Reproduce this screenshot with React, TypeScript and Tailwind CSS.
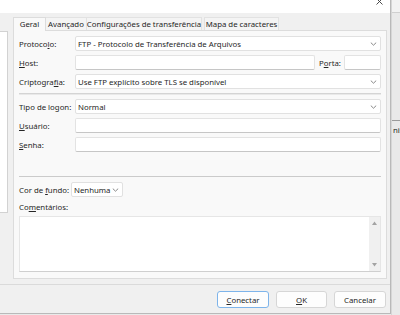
function Chevron() {
  return (
    <svg width="7" height="4" viewBox="0 0 7 4" className="shrink-0">
      <path d="M0.8 0.6 L3.5 3.2 L6.2 0.6" fill="none" stroke="#7a7a7a" strokeWidth="0.9" />
    </svg>
  );
}

function Combo({ value, className = "" }: { value: string; className?: string }) {
  return (
    <div
      className={`flex h-[15px] items-center justify-between rounded-[2px] border border-[#e1e1e1] bg-white pl-[2px] pr-[3px] ${className}`}
    >
      <span className="leading-[12px]">{value}</span>
      <Chevron />
    </div>
  );
}

function Input({ className = "" }: { className?: string }) {
  return (
    <div
      className={`h-[15px] rounded-[2px] border border-[#e3e3e3] border-b-[#c6c6c6] bg-white ${className}`}
    />
  );
}

function Label({ children, className = "w-[56px]" }: { children: React.ReactNode; className?: string }) {
  return <div className={`shrink-0 leading-[12px] ${className}`}>{children}</div>;
}

function Triangle({ up }: { up?: boolean }) {
  return (
    <svg width="5" height="4" viewBox="0 0 5 4">
      <path d={up ? "M0 4 L2.5 0.5 L5 4 Z" : "M0 0 L2.5 3.5 L5 0 Z"} fill="#a3a3a3" />
    </svg>
  );
}

const TABS = [
  { label: "Avançado", w: "w-[41px]" },
  { label: "Configurações de transferência", w: "w-[115px]" },
];

export default function App() {
  return (
    <div className="flex h-[315px] w-[400px] overflow-hidden whitespace-nowrap bg-[#e9e9e9] font-['Noto_Sans',sans-serif] text-[7.8px] text-[#262626]">
      {/* dialog */}
      <div className="flex h-[314px] w-[391px] shrink-0 flex-col border-r border-b border-[#b9b9b9] bg-[#f0f0f0]">
        <div className="flex h-[13px] justify-end bg-white pr-[7px]">
          <svg width="7" height="7" viewBox="0 0 7 7" className="mt-[-2px]">
            <path d="M0.5 0.5 L6.5 6.5 M6.5 0.5 L0.5 6.5" stroke="#3a3a3a" strokeWidth="0.9" />
          </svg>
        </div>

        <div className="flex h-[266px]">
          <div className="mt-[18px] h-[182px] w-[8px] border-y border-r border-[#d2d2d2] bg-white" />

          <div className="ml-[5px] flex w-[374px] flex-col">
            {/* tabs */}
            <div className="flex h-[17px] items-end">
              <div className="relative z-10 mb-[-1px] flex h-[14px] w-[33px] items-center justify-center border-x border-t border-[#dcdcdc] bg-[#f9f9f9] pb-[1px] leading-[12px]">
                Geral
              </div>
              {TABS.map((t) => (
                <div
                  key={t.label}
                  className={`flex h-[13px] items-center justify-center border-t border-r border-[#e2e2e2] bg-[#f4f4f4] leading-[12px] ${t.w}`}
                >
                  {t.label}
                </div>
              ))}
              <div className="ml-[2px] flex h-[13px] w-[75px] items-center justify-center border-x border-t border-[#e2e2e2] bg-[#f4f4f4] leading-[12px]">
                Mapa de caracteres
              </div>
            </div>

            {/* panel */}
            <div className="flex h-[249px] flex-col border border-[#dcdcdc] bg-[#f9f9f9] pl-[5px] pr-[5px]">
              <div className="mt-[5px] flex items-center">
                <Label>
                  Protoco<u>l</u>o:
                </Label>
                <Combo value="FTP - Protocolo de Transferência de Arquivos" className="flex-1" />
              </div>
              <div className="mt-[4px] flex items-center">
                <Label>
                  <u>H</u>ost:
                </Label>
                <Input className="w-[240px]" />
                <Label className="ml-[4px] w-[25px]">
                  P<u>o</u>rta:
                </Label>
                <Input className="flex-1" />
              </div>
              <div className="mt-[4px] flex items-center">
                <Label>
                  Criptogra<u>f</u>ia:
                </Label>
                <Combo value="Use FTP explícito sobre TLS se disponível" className="flex-1" />
              </div>
              <div className="mt-[4px] h-[2px] border-t border-b border-t-[#d4d4d4] border-b-[#e9e9e9]" />
              <div className="mt-[4px] flex items-center">
                <Label>Tipo de logon:</Label>
                <Combo value="Normal" className="flex-1" />
              </div>
              <div className="mt-[4px] flex items-center">
                <Label>
                  <u>U</u>suário:
                </Label>
                <Input className="flex-1" />
              </div>
              <div className="mt-[4px] flex items-center">
                <Label>
                  <u>S</u>enha:
                </Label>
                <Input className="flex-1" />
              </div>
              <div className="mt-[24px] h-px bg-[#cbcbcb]" />
              <div className="mt-[5px] flex items-center">
                <Label className="w-[52px]">
                  Cor de <u>f</u>undo:
                </Label>
                <Combo value="Nenhuma" className="w-[52px]" />
              </div>
              <div className="mt-[5px] h-[10px] leading-[10px]">
                Co<u>m</u>entários:
              </div>
              <div className="mt-[4px] flex h-[56px] border border-[#e6e6e6] border-b-[#cfcfcf] bg-white">
                <div className="flex-1" />
                <div className="flex w-[11px] flex-col items-center justify-between bg-[#f0f0f0] py-[4px]">
                  <Triangle up />
                  <Triangle />
                </div>
              </div>
            </div>
          </div>
        </div>

        <div className="mt-[5px] h-px bg-[#dadada]" />
        <div className="mt-[6px] flex justify-end gap-[7px] pr-[4px]">
          <button className="flex h-[17px] w-[52px] items-center justify-center rounded-[3px] border border-[#7eb4ea] bg-[#fdfdfd] leading-[12px]">
            <span>
              <u>C</u>onectar
            </span>
          </button>
          <button className="flex h-[17px] w-[51px] items-center justify-center rounded-[3px] border border-[#d6d6d6] bg-[#fdfdfd] leading-[12px]">
            <span>
              <u>O</u>K
            </span>
          </button>
          <button className="flex h-[17px] w-[52px] items-center justify-center rounded-[3px] border border-[#d6d6d6] bg-[#fdfdfd] leading-[12px]">
            Cancelar
          </button>
        </div>
      </div>

      {/* window behind */}
      <div className="flex flex-1 flex-col overflow-hidden border-l border-[#d6d6d6]">
        <div className="h-[13px] border-b border-[#cfcfcf] bg-[#f2f2f2]" />
        <div className="mt-[107px] h-px bg-[#9a9a9a]" />
        <div className="mt-[6px] pl-[1px] leading-none">nis</div>
      </div>
    </div>
  );
}
